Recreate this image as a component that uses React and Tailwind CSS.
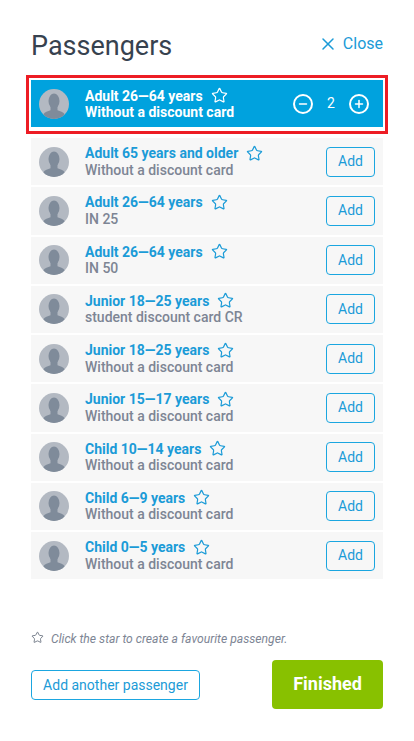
import { X, Star, Minus, Plus } from 'lucide-react';

const passengers = [
  { name: 'Adult 65 years and older', card: 'Without a discount card' },
  { name: 'Adult 26—64 years', card: 'IN 25' },
  { name: 'Adult 26—64 years', card: 'IN 50' },
  { name: 'Junior 18—25 years', card: 'student discount card CR' },
  { name: 'Junior 18—25 years', card: 'Without a discount card' },
  { name: 'Junior 15—17 years', card: 'Without a discount card' },
  { name: 'Child 10—14 years', card: 'Without a discount card' },
  { name: 'Child 6—9 years', card: 'Without a discount card' },
  { name: 'Child 0—5 years', card: 'Without a discount card' },
];

function Avatar() {
  return (
    <svg width="30" height="30" viewBox="0 0 30 30" className="shrink-0">
      <defs>
        <clipPath id="avatar-clip">
          <circle cx="15" cy="15" r="15" />
        </clipPath>
      </defs>
      <circle cx="15" cy="15" r="15" fill="#b3b9c2" />
      <g clipPath="url(#avatar-clip)" fill="#7f8b9a">
        <ellipse cx="15" cy="12" rx="5.500" ry="7.500" />
        <path d="M11.500 17h7v4.200c2.500 1.200 6 1.800 7 3.800V30h-21v-5c1-2 4.500-2.600 7-3.800z" />
      </g>
    </svg>
  );
}

function Row({ name, card }) {
  return (
    <div className="mb-[2px] flex h-[47.25px] items-center bg-[#f7f7f7] pl-[8px] pr-[8px]">
      <Avatar />
      <div className="mb-[1px] ml-[16px] min-w-0 flex-1 text-[14px] leading-[16px] font-medium">
        <div className="flex items-center font-bold text-[#1b9bd7]">
          <span>{name}</span>
          <Star size={17} strokeWidth={1.7} className="ml-[8px]" />
        </div>
        <div className="text-[#7d8594]">{card}</div>
      </div>
      <button className="h-[30px] w-[49px] rounded-[4px] border border-[#1ba6e0] text-[14px] text-[#1b9bd7]">
        Add
      </button>
    </div>
  );
}

export default function App() {
  return (
    <div className="h-[741px] w-[414px] overflow-hidden bg-white px-[31px] font-['Roboto',sans-serif]">
      <div className="flex h-[75px] items-start justify-between pt-[27px]">
        <h1 className="text-[27px] leading-[38px] text-[#37424f]">Passengers</h1>
        <button className="flex items-center pt-[7px] text-[16px] leading-[16px] text-[#1b9bd7]">
          <X size={20} strokeWidth={1.8} className="mr-[5px]" />
          Close
        </button>
      </div>

      <div className="-mx-[5px] mb-[4px] h-[59px] border-[3px] border-[#ed1c24] p-[2px]">
        <div className="flex h-[47px] items-center bg-[#00a2de] pl-[8px] pr-[14px] text-white">
          <Avatar />
          <div className="ml-[16px] flex-1 text-[14px] leading-[16px] font-bold">
            <div className="flex items-center">
              <span>Adult 26—64 years</span>
              <Star size={17} strokeWidth={1.7} className="ml-[8px]" />
            </div>
            <div>Without a discount card</div>
          </div>
          <span className="flex h-[20px] w-[20px] items-center justify-center rounded-full border-2 border-white">
            <Minus size={12} strokeWidth={3} />
          </span>
          <span className="w-[36px] text-center text-[14px]">2</span>
          <span className="flex h-[20px] w-[20px] items-center justify-center rounded-full border-2 border-white">
            <Plus size={12} strokeWidth={3} />
          </span>
        </div>
      </div>

      {passengers.map((p, i) => (
        <Row key={i} name={p.name} card={p.card} />
      ))}

      <div className="mt-[51px] flex items-center text-[12.15px] italic text-[#7d8594]">
        <Star size={13} strokeWidth={1.5} className="mr-[7px] -mt-[4px] text-[#5c6675]" />
        Click the star to create a favourite passenger.
      </div>

      <div className="mt-[12px] flex items-center justify-between">
        <button className="mt-[1px] h-[30px] w-[169px] rounded-[4px] border border-[#1ba6e0] text-[14px] text-[#1b9bd7]">
          Add another passenger
        </button>
        <button className="h-[49px] w-[111px] rounded-[4px] bg-[#88c100] pb-[2px] text-[18px] font-bold text-white">
          Finished
        </button>
      </div>
    </div>
  );
}
